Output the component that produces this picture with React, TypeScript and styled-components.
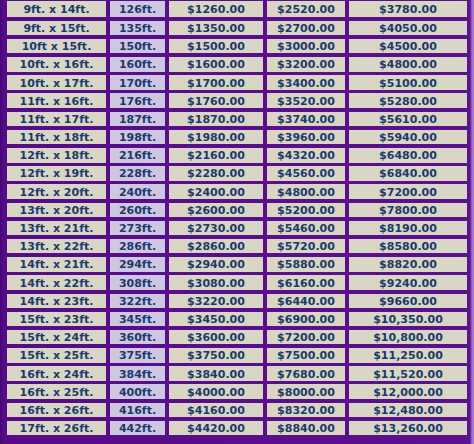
import React from "react";
import styled, { createGlobalStyle } from "styled-components";

const Global = createGlobalStyle`
  html, body { margin: 0; padding: 0; background: #5a0f8c; }
  #root { width: 474px; height: 444px; overflow: hidden; }
`;

const Table = styled.div`
  box-sizing: border-box;
  width: 474px;
  height: 444px;
  padding: 1px 7px 0 7px;
  display: grid;
  grid-template-columns: 99px 55px 94px 78px 118px;
  grid-template-rows: 16px repeat(23, 14.5px);
  column-gap: 4px;
  row-gap: 3.7px;
  background: linear-gradient(
    to right,
    #430770 0px,
    #560c88 4px,
    #5b108e 460px,
    #5e1490 470px,
    #9a74c2 472px,
    #a584cc 474px
  );
`;

const Cell = styled.div<{ $alt?: boolean }>`
  display: flex;
  align-items: center;
  justify-content: center;
  background: ${(p) => (p.$alt ? "#cfc6e2" : "#d9d6c5")};
  color: #1c3a6b;
  font-family: "DejaVu Sans", Verdana, sans-serif;
  font-weight: bold;
  font-size: 11px;
  line-height: 1;
  white-space: nowrap;
  padding-top: 1px;
`;

const rows: [string, string, string, string, string][] = [
  ["9ft. x 14ft.", "126ft.", "$1260.00", "$2520.00", "$3780.00"],
  ["9ft. x 15ft.", "135ft.", "$1350.00", "$2700.00", "$4050.00"],
  ["10ft x 15ft.", "150ft.", "$1500.00", "$3000.00", "$4500.00"],
  ["10ft. x 16ft.", "160ft.", "$1600.00", "$3200.00", "$4800.00"],
  ["10ft. x 17ft.", "170ft.", "$1700.00", "$3400.00", "$5100.00"],
  ["11ft. x 16ft.", "176ft.", "$1760.00", "$3520.00", "$5280.00"],
  ["11ft. x 17ft.", "187ft.", "$1870.00", "$3740.00", "$5610.00"],
  ["11ft. x 18ft.", "198ft.", "$1980.00", "$3960.00", "$5940.00"],
  ["12ft. x 18ft.", "216ft.", "$2160.00", "$4320.00", "$6480.00"],
  ["12ft. x 19ft.", "228ft.", "$2280.00", "$4560.00", "$6840.00"],
  ["12ft. x 20ft.", "240ft.", "$2400.00", "$4800.00", "$7200.00"],
  ["13ft. x 20ft.", "260ft.", "$2600.00", "$5200.00", "$7800.00"],
  ["13ft. x 21ft.", "273ft.", "$2730.00", "$5460.00", "$8190.00"],
  ["13ft. x 22ft.", "286ft.", "$2860.00", "$5720.00", "$8580.00"],
  ["14ft. x 21ft.", "294ft.", "$2940.00", "$5880.00", "$8820.00"],
  ["14ft. x 22ft.", "308ft.", "$3080.00", "$6160.00", "$9240.00"],
  ["14ft. x 23ft.", "322ft.", "$3220.00", "$6440.00", "$9660.00"],
  ["15ft. x 23ft.", "345ft.", "$3450.00", "$6900.00", "$10,350.00"],
  ["15ft. x 24ft.", "360ft.", "$3600.00", "$7200.00", "$10,800.00"],
  ["15ft. x 25ft.", "375ft.", "$3750.00", "$7500.00", "$11,250.00"],
  ["16ft. x 24ft.", "384ft.", "$3840.00", "$7680.00", "$11,520.00"],
  ["16ft. x 25ft.", "400ft.", "$4000.00", "$8000.00", "$12,000.00"],
  ["16ft. x 26ft.", "416ft.", "$4160.00", "$8320.00", "$12,480.00"],
  ["17ft. x 26ft.", "442ft.", "$4420.00", "$8840.00", "$13,260.00"],
];

export default function App() {
  return (
    <>
      <Global />
      <Table>
        {rows.map((r, i) =>
          r.map((v, j) => (
            <Cell key={`${i}-${j}`} $alt={j === 1}>
              {v}
            </Cell>
          ))
        )}
      </Table>
    </>
  );
}
